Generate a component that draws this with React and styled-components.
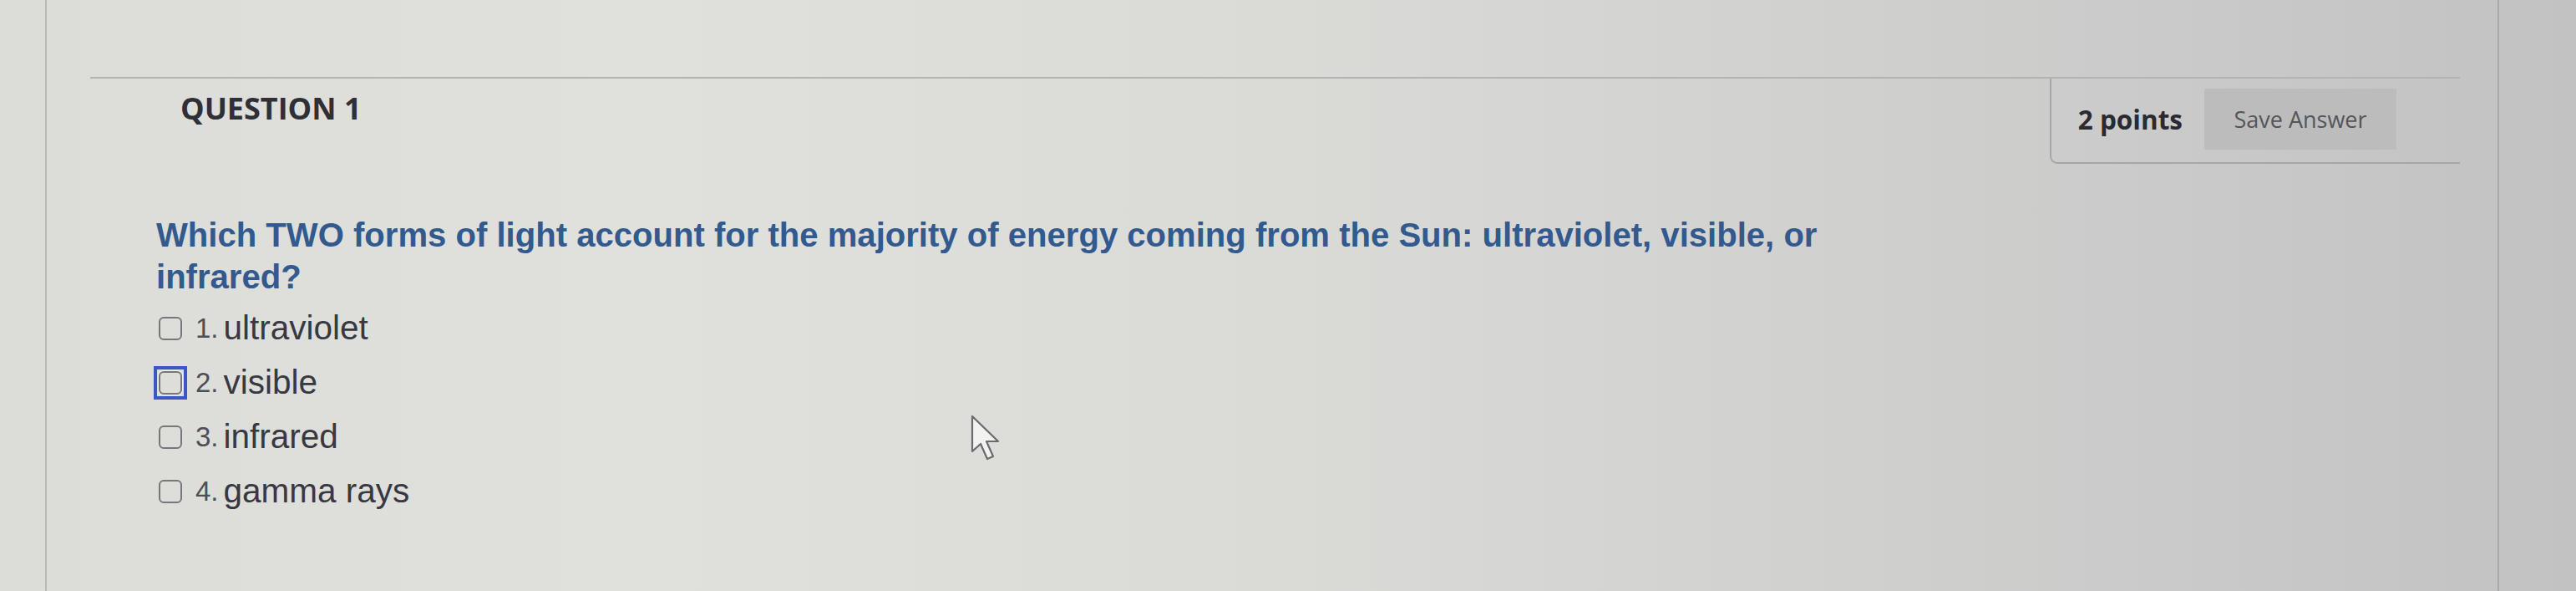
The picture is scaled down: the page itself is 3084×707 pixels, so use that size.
import React from "react";
import styled, { createGlobalStyle } from "styled-components";

const Global = createGlobalStyle`
  html, body { margin: 0; padding: 0; }
  body {
    width: 3084px;
    height: 707px;
    overflow: hidden;
    background: linear-gradient(to right, #dcdcd8 0%, #e0e0dc 25%, #dadad7 50%, #d0d0cf 72%, #c7c7c7 90%, #c2c2c2 100%);
    font-family: "Liberation Sans", Arial, sans-serif;
  }
`;

const Page = styled.div`
  position: relative;
  display: flex;
  height: 707px;
`;

const Gutter = styled.div`
  width: ${(p) => p.$w}px;
  flex: none;
`;

const Main = styled.main`
  flex: 1;
  border-left: 2px solid #b9b9b6;
  border-right: 2px solid #a9a9a9;
  padding-top: 92px;
`;

const QuestionBlock = styled.section`
  margin: 0 45px 0 52px;
  border-top: 2px solid #b3b3b1;
`;

const Header = styled.div`
  display: flex;
  justify-content: space-between;
  align-items: flex-start;
`;

const Title = styled.h2`
  margin: 11px 0 0 108px;
  font-family: "Open Sans", sans-serif;
  font-weight: 700;
  font-size: 36px;
  line-height: 49px;
  color: #2f2f38;
`;

const PointsBox = styled.div`
  display: flex;
  align-items: center;
  gap: 26px;
  padding: 12px 76px 15px 32px;
  border-left: 2px solid #a6a6a6;
  border-bottom: 2px solid #a6a6a6;
  border-bottom-left-radius: 9px;
`;

const Points = styled.span`
  font-family: "Open Sans", sans-serif;
  font-weight: 700;
  font-size: 31.5px;
  color: #2a2a30;
`;

const SaveButton = styled.button`
  width: 230px;
  height: 73px;
  border: none;
  border-radius: 2px;
  background: #bcbcbc;
  font-family: "Open Sans", sans-serif;
  font-size: 27px;
  color: #55555a;
  padding: 0;
  cursor: pointer;
`;

const Prompt = styled.p`
  margin: 60px 0 0 79px;
  width: 2100px;
  font-family: "Liberation Sans", Arial, sans-serif;
  font-weight: 700;
  font-size: 40.1px;
  line-height: 50px;
  color: #325a8e;
`;

const Options = styled.ul`
  list-style: none;
  margin: 4px 0 0 76px;
  padding: 0;
`;

const Option = styled.li`
  display: flex;
  align-items: center;
  height: 65px;
  font-family: "Liberation Sans", Arial, sans-serif;
  color: #383842;
`;

const Ring = styled.span`
  display: flex;
  align-items: center;
  justify-content: center;
  width: 40px;
  height: 40px;
  flex: none;
  box-sizing: border-box;
  border: 4px solid ${(p) => (p.$focused ? "#3a57c3" : "transparent")};
  margin-right: 10px;
`;

const Box = styled.span`
  width: 28px;
  height: 28px;
  box-sizing: border-box;
  border: 2px solid #76767c;
  border-radius: 6px;
  box-shadow: ${(p) => (p.$focused ? "0 0 0 1px #eef0f5" : "none")};
`;

const Num = styled.span`
  font-size: 33px;
  color: #4e4e56;
  margin-right: 6px;
`;

const Label = styled.span`
  font-size: 40.5px;
`;

const Cursor = styled.svg`
  position: absolute;
  left: 1162px;
  top: 496px;
`;

const options = [
  { n: "1.", t: "ultraviolet" },
  { n: "2.", t: "visible", focused: true },
  { n: "3.", t: "infrared" },
  { n: "4.", t: "gamma rays" },
];

export default function App() {
  return (
    <>
      <Global />
      <Page>
        <Gutter $w={54} />
        <Main>
          <QuestionBlock>
            <Header>
              <Title>QUESTION 1</Title>
              <PointsBox>
                <Points>2 points</Points>
                <SaveButton>Save Answer</SaveButton>
              </PointsBox>
            </Header>
            <Prompt>
              Which TWO forms of light account for the majority of energy coming
              from the Sun: ultraviolet, visible, or infrared?
            </Prompt>
            <Options>
              {options.map((o) => (
                <Option key={o.n}>
                  <Ring $focused={o.focused}>
                    <Box $focused={o.focused} />
                  </Ring>
                  <Num>{o.n}</Num>
                  <Label>{o.t}</Label>
                </Option>
              ))}
            </Options>
          </QuestionBlock>
        </Main>
        <Gutter $w={92} />
        <Cursor width="36" height="56" viewBox="0 0 36 56">
          <path
            d="M2 2 L2 44 L12 35 L20 53 L27 50 L19 32 L33 32 Z"
            fill="#f2f2f0"
            stroke="#6b6b6e"
            strokeWidth="2.2"
            strokeLinejoin="round"
          />
        </Cursor>
      </Page>
    </>
  );
}
